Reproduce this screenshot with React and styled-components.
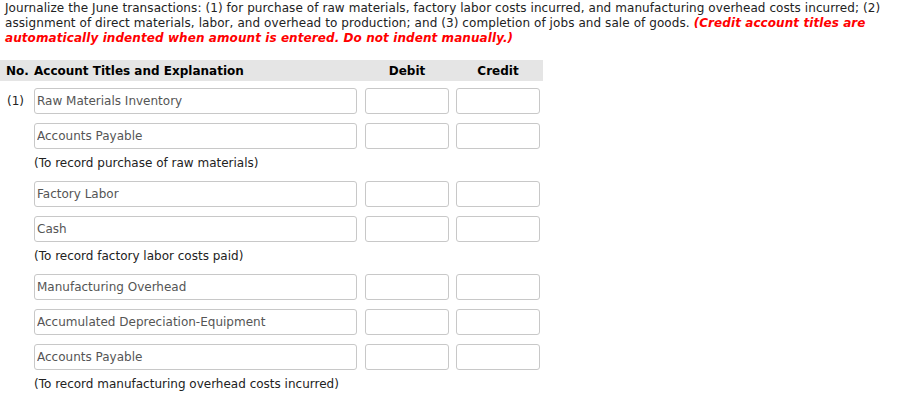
import React from 'react';
import styled, { createGlobalStyle } from 'styled-components';

const GlobalStyle = createGlobalStyle`
  body {
    margin: 0;
    background: #fff;
    font-family: Verdana, "DejaVu Sans", sans-serif;
    color: #222;
  }
`;

const entries = [
  {
    no: '(1)',
    lines: ['Raw Materials Inventory', 'Accounts Payable'],
    note: '(To record purchase of raw materials)',
  },
  {
    lines: ['Factory Labor', 'Cash'],
    note: '(To record factory labor costs paid)',
  },
  {
    lines: ['Manufacturing Overhead', 'Accumulated Depreciation-Equipment', 'Accounts Payable'],
    note: '(To record manufacturing overhead costs incurred)',
  },
];

export default function App() {
  return (
    <Page>
      <GlobalStyle />
      <Instructions>
        Journalize the June transactions: (1) for purchase of raw materials, factory labor costs incurred, and
        manufacturing overhead costs incurred; (2) assignment of direct materials, labor, and overhead to
        production; and (3) completion of jobs and sale of goods.{' '}
        <Warning>(Credit account titles are automatically indented when amount is entered. Do not indent manually.)</Warning>
      </Instructions>

      <Journal>
        <HeaderRow>
          <HeadCell>No.</HeadCell>
          <HeadCell>Account Titles and Explanation</HeadCell>
          <HeadCell center>Debit</HeadCell>
          <HeadCell center>Credit</HeadCell>
        </HeaderRow>

        {entries.map((entry, i) => (
          <React.Fragment key={i}>
            {entry.lines.map((line, j) => (
              <EntryRow key={j}>
                <NoCell>{j === 0 ? entry.no : ''}</NoCell>
                <AccountInput readOnly value={line} />
                <AmountInput readOnly value="" />
                <AmountInput readOnly value="" />
              </EntryRow>
            ))}
            <NoteRow>
              <span />
              <Note>{entry.note}</Note>
            </NoteRow>
          </React.Fragment>
        ))}
      </Journal>
    </Page>
  );
}

const Page = styled.div`
  padding: 1px 0 0 5px;
`;

const Instructions = styled.p`
  margin: 0;
  font-size: 12px;
  line-height: 15px;
  letter-spacing: 0.08px;
  width: 890px;
`;

const Warning = styled.span`
  color: #f00;
  font-weight: bold;
  font-style: italic;
`;

const Journal = styled.div`
  margin: 14px 0 0 -5px;
  width: 543px;
`;

const columns = `34px 331px 91px 87px`;

const HeaderRow = styled.div`
  display: grid;
  grid-template-columns: ${columns};
  height: 21px;
  align-items: center;
  background: #e5e5e5;
  margin-bottom: 7px;
`;

const HeadCell = styled.div`
  font-size: 12px;
  font-weight: bold;
  color: #000;
  padding-left: ${(p) => (p.center ? '0' : '6px')};
  width: ${(p) => (p.center ? '84px' : 'auto')};
  text-align: ${(p) => (p.center ? 'center' : 'left')};

  &:nth-child(2) {
    padding-left: 0;
  }
`;

const EntryRow = styled.div`
  display: grid;
  grid-template-columns: ${columns};
  align-items: center;
  margin-bottom: 9px;
`;

const NoCell = styled.div`
  font-size: 12px;
  color: #222;
  padding-left: 7px;
`;

const Field = styled.input`
  box-sizing: border-box;
  height: 26px;
  margin: 0;
  border: 1px solid #c8c8c8;
  border-radius: 3px;
  background: #fff;
  font-family: Verdana, "DejaVu Sans", sans-serif;
  font-size: 12px;
  color: #555;
  padding: 0 2px;
  outline: none;
`;

const AccountInput = styled(Field)`
  width: 323px;
`;

const AmountInput = styled(Field)`
  width: 84px;
`;

const NoteRow = styled.div`
  display: grid;
  grid-template-columns: 34px 1fr;
  height: 18px;
  align-items: center;
  margin: -4px 0 9px;
`;

const Note = styled.span`
  font-size: 12px;
  color: #222;
`;
